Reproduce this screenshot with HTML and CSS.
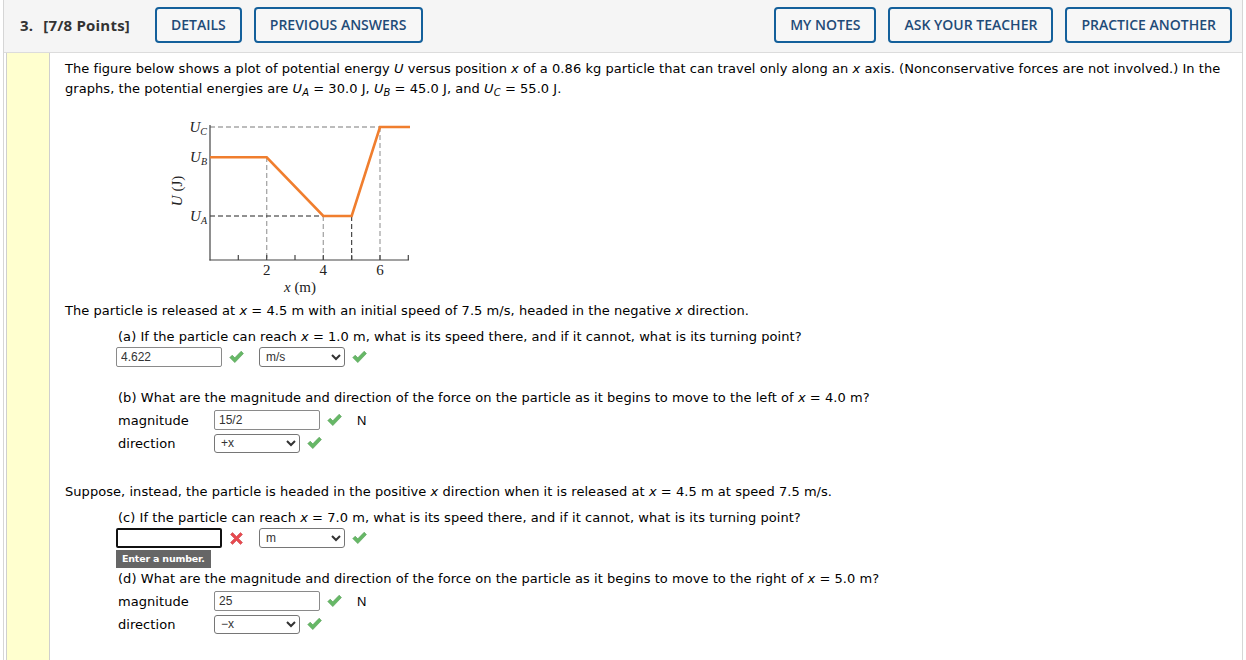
FILE: index.html
```html
<!DOCTYPE html>
<html>
<head>
<meta charset="utf-8">
<link rel="stylesheet" href="styles.css">
</head>
<body>
<div class="page">
  <header class="qhead">
    <div class="qnum">3.<span class="pts">[7/8 Points]</span></div>
    <div class="btns">
      <button class="btn">DETAILS</button>
      <button class="btn">PREVIOUS ANSWERS</button>
    </div>
    <div class="btns right">
      <button class="btn">MY NOTES</button>
      <button class="btn">ASK YOUR TEACHER</button>
      <button class="btn">PRACTICE ANOTHER</button>
    </div>
  </header>
  <div class="qbody">
    <div class="strip"></div>
    <div class="content">
      <p class="para">The figure below shows a plot of potential energy <i>U</i> versus position <i>x</i> of a 0.86 kg particle that can travel only along an <i>x</i> axis. (Nonconservative forces are not involved.) In the graphs, the potential energies are <i>U<sub>A</sub></i> = 30.0 J, <i>U<sub>B</sub></i> = 45.0 J, and <i>U<sub>C</sub></i> = 55.0 J.</p>
      <div class="figure">
        <svg width="270" height="192" viewBox="0 0 270 192">
          <g class="dash-gray">
            <line x1="60" y1="22" x2="230" y2="22"/>
            <line x1="230" y1="22" x2="230" y2="155"/>
            <line x1="116.7" y1="52" x2="116.7" y2="155"/>
            <line x1="173.3" y1="111" x2="173.3" y2="155"/>
          </g>
          <g class="dash-black">
            <line x1="60" y1="111" x2="173" y2="111"/>
            <line x1="201.7" y1="111" x2="201.7" y2="155"/>
          </g>
          <g class="axis">
            <line x1="60" y1="20" x2="60" y2="155.5"/>
            <line x1="59.5" y1="155" x2="259" y2="155"/>
            <line x1="88.3" y1="150" x2="88.3" y2="155"/>
            <line x1="116.7" y1="150" x2="116.7" y2="155"/>
            <line x1="145" y1="150" x2="145" y2="155"/>
            <line x1="173.3" y1="150" x2="173.3" y2="155"/>
            <line x1="201.7" y1="150" x2="201.7" y2="155"/>
            <line x1="230" y1="150" x2="230" y2="155"/>
            <line x1="258.3" y1="150" x2="258.3" y2="155"/>
          </g>
          <polyline class="curve" points="60,52.3 116.7,52.3 173.3,111 201.7,111 230,22 260,22"/>
          <text class="lbl" x="57" y="27" text-anchor="end"><tspan font-style="italic">U</tspan><tspan class="sub" font-style="italic" dy="3">C</tspan></text>
          <text class="lbl" x="57" y="57" text-anchor="end"><tspan font-style="italic">U</tspan><tspan class="sub" font-style="italic" dy="3">B</tspan></text>
          <text class="lbl" x="57" y="116" text-anchor="end"><tspan font-style="italic">U</tspan><tspan class="sub" font-style="italic" dy="3">A</tspan></text>
          <text class="lbl" x="116.7" y="170" text-anchor="middle">2</text>
          <text class="lbl" x="173.3" y="170" text-anchor="middle">4</text>
          <text class="lbl" x="230" y="170" text-anchor="middle">6</text>
          <text class="lbl" x="150" y="187" text-anchor="middle"><tspan font-style="italic">x</tspan> (m)</text>
          <text class="lbl" transform="translate(32,86) rotate(-90)" text-anchor="middle"><tspan font-style="italic">U</tspan> (J)</text>
        </svg>
      </div>
      <p class="para">The particle is released at <i>x</i> = 4.5 m with an initial speed of 7.5 m/s, headed in the negative <i>x</i> direction.</p>

      <div class="part part-a">
        <p class="ptext">(a) If the particle can reach <i>x</i> = 1.0 m, what is its speed there, and if it cannot, what is its turning point?</p>
        <div class="ansrow">
          <input class="num" type="text" value="4.622">
          <svg class="mark" width="15" height="14" viewBox="0 0 15 14"><path class="chk" d="M0.8 7.6 L3.2 5.2 L5.8 7.8 L12.2 1.2 L14.4 3.6 L5.8 12.6 Z"/></svg>
          <select class="sel"><option>m/s</option></select>
          <svg class="mark" width="15" height="14" viewBox="0 0 15 14"><path class="chk" d="M0.8 7.6 L3.2 5.2 L5.8 7.8 L12.2 1.2 L14.4 3.6 L5.8 12.6 Z"/></svg>
        </div>
      </div>

      <div class="part part-b">
        <p class="ptext">(b) What are the magnitude and direction of the force on the particle as it begins to move to the left of <i>x</i> = 4.0 m?</p>
        <div class="frow">
          <span class="flabel">magnitude</span>
          <input class="num" type="text" value="15/2">
          <svg class="mark" width="15" height="14" viewBox="0 0 15 14"><path class="chk" d="M0.8 7.6 L3.2 5.2 L5.8 7.8 L12.2 1.2 L14.4 3.6 L5.8 12.6 Z"/></svg>
          <span class="unit">N</span>
        </div>
        <div class="frow">
          <span class="flabel">direction</span>
          <select class="sel"><option>+x</option></select>
          <svg class="mark" width="15" height="14" viewBox="0 0 15 14"><path class="chk" d="M0.8 7.6 L3.2 5.2 L5.8 7.8 L12.2 1.2 L14.4 3.6 L5.8 12.6 Z"/></svg>
        </div>
      </div>

      <p class="para suppose">Suppose, instead, the particle is headed in the positive <i>x</i> direction when it is released at <i>x</i> = 4.5 m at speed 7.5 m/s.</p>

      <div class="part part-c">
        <p class="ptext">(c) If the particle can reach <i>x</i> = 7.0 m, what is its speed there, and if it cannot, what is its turning point?</p>
        <div class="ansrow">
          <input class="num focus" type="text" value="">
          <svg class="mark" width="15" height="14" viewBox="0 0 15 14"><path class="xm" d="M1.5 3.5 L3.5 1.5 L7.5 5.5 L11.5 1.5 L13.5 3.5 L9.5 7.5 L13.5 11.5 L11.5 13.5 L7.5 9.5 L3.5 13.5 L1.5 11.5 L5.5 7.5 Z"/></svg>
          <select class="sel"><option>m</option></select>
          <svg class="mark" width="15" height="14" viewBox="0 0 15 14"><path class="chk" d="M0.8 7.6 L3.2 5.2 L5.8 7.8 L12.2 1.2 L14.4 3.6 L5.8 12.6 Z"/></svg>
        </div>
        <div class="tip">Enter a number.</div>
      </div>

      <div class="part part-d">
        <p class="ptext">(d) What are the magnitude and direction of the force on the particle as it begins to move to the right of <i>x</i> = 5.0 m?</p>
        <div class="frow">
          <span class="flabel">magnitude</span>
          <input class="num" type="text" value="25">
          <svg class="mark" width="15" height="14" viewBox="0 0 15 14"><path class="chk" d="M0.8 7.6 L3.2 5.2 L5.8 7.8 L12.2 1.2 L14.4 3.6 L5.8 12.6 Z"/></svg>
          <span class="unit">N</span>
        </div>
        <div class="frow">
          <span class="flabel">direction</span>
          <select class="sel"><option>&minus;x</option></select>
          <svg class="mark" width="15" height="14" viewBox="0 0 15 14"><path class="chk" d="M0.8 7.6 L3.2 5.2 L5.8 7.8 L12.2 1.2 L14.4 3.6 L5.8 12.6 Z"/></svg>
        </div>
      </div>
    </div>
  </div>
</div>
</body>
</html>
```

FILE: styles.css
```css
html, body {
  margin: 0;
  padding: 0;
  background: #fff;
}
body {
  font-family: "DejaVu Sans", Verdana, sans-serif;
  font-size: 13px;
  color: #000;
  letter-spacing: 0.05px;
}
.page {
  margin-left: 3px;
  width: 1238px;
  height: 660px;
  border-left: 1px solid #d6d6d6;
  border-right: 1px solid #d6d6d6;
  display: flex;
  flex-direction: column;
}
.qhead {
  height: 53px;
  box-sizing: border-box;
  background: #f5f5f5;
  border-bottom: 1px solid #dcdcdc;
  display: flex;
  align-items: center;
  padding: 0 10px 3px 16px;
  flex-shrink: 0;
}
.qnum {
  font-family: "Open Sans", sans-serif;
  font-weight: 700;
  font-size: 15px;
  color: #333;
  margin-right: 25px;
  letter-spacing: 0.2px;
}
.pts {
  margin-left: 10px;
}
.btns {
  display: flex;
  gap: 12px;
}
.btns.right {
  margin-left: auto;
}
.btn {
  height: 36px;
  padding: 0 14px;
  border: 2px solid #14609b;
  border-radius: 4px;
  background: #f7f7f7;
  color: #1f4b78;
  font-family: "Open Sans", sans-serif;
  font-weight: 600;
  font-size: 14px;
  letter-spacing: 0;
  cursor: pointer;
}
.qbody {
  flex: 1;
  display: flex;
}
.strip {
  margin-left: 2px;
  width: 42px;
  background: #ffffcf;
  border-left: 1px solid #cfcfcf;
  border-right: 1px solid #cfcfcf;
}
.content {
  flex: 1;
  padding: 6px 10px 0 15px;
}
.para {
  margin: 0;
  line-height: 20px;
}
sub {
  font-size: 10px;
  line-height: 0;
  vertical-align: -3px;
}
.figure {
  padding-left: 85px;
  margin-top: 6px;
  height: 196px;
}
.figure svg {
  display: block;
}
.dash-gray line {
  stroke: #a6a6a6;
  stroke-width: 1.3;
  stroke-dasharray: 5 3;
}
.dash-black line {
  stroke: #222;
  stroke-width: 1;
  stroke-dasharray: 5 3;
}
.axis line {
  stroke: #444;
  stroke-width: 1.2;
}
.curve {
  fill: none;
  stroke: #f07e2e;
  stroke-width: 2.6;
  stroke-linejoin: miter;
}
.lbl {
  font-family: "Liberation Serif", "DejaVu Serif", serif;
  font-size: 15px;
  fill: #222;
  letter-spacing: 0;
}
.lbl .sub {
  font-size: 10px;
}
.part {
  margin-left: 51px;
}
.part-a {
  margin-top: 6px;
}
.part-b {
  margin-top: 21px;
}
.part-c {
  margin-top: 6px;
}
.ptext {
  margin: 0;
  line-height: 20px;
  padding-left: 2px;
}
.ansrow, .frow {
  display: flex;
  align-items: center;
  height: 20px;
}
.frow {
  margin-top: 2px;
}
.frow + .frow {
  margin-top: 3px;
}
.flabel {
  width: 98px;
  padding-left: 2px;
  box-sizing: border-box;
}
.num {
  width: 106px;
  height: 20px;
  box-sizing: border-box;
  border: 1px solid #8a8a8a;
  border-radius: 2px;
  padding: 0 4px;
  font-family: "Liberation Sans", Arial, sans-serif;
  font-size: 12px;
  color: #333;
  background: #fff;
  margin: 0;
}
.num.focus {
  border: 2px solid #111;
}
.sel {
  width: 86px;
  height: 20px;
  box-sizing: border-box;
  font-family: "Liberation Sans", Arial, sans-serif;
  font-size: 12px;
  color: #333;
  margin: 0;
  padding: 0 2px;
  border: 1px solid #767676;
  border-radius: 3px;
  background: #fff;
}
.frow .sel {
  height: 19px;
}
.mark {
  display: block;
  margin-left: 7px;
  flex-shrink: 0;
}
.ansrow .mark + .sel {
  margin-left: 15px;
}
.chk {
  fill: #66b866;
  stroke: #4f9a4f;
  stroke-width: 0.6;
}
.xm {
  fill: #e8494f;
  stroke: #c23a3f;
  stroke-width: 0.5;
}
.unit {
  margin-left: 15px;
  font-family: "Liberation Sans", Arial, sans-serif;
}
.suppose {
  margin-top: 29px;
}
.tip {
  display: inline-block;
  margin-top: 2px;
  margin-bottom: 1px;
  background: #666;
  color: #fff;
  font-size: 9.5px;
  font-weight: 700;
  line-height: 18px;
  padding: 0 6px;
  font-family: "DejaVu Sans", Verdana, sans-serif;
  letter-spacing: -0.2px;
}
.part-d {
  margin-top: 0;
}
```
